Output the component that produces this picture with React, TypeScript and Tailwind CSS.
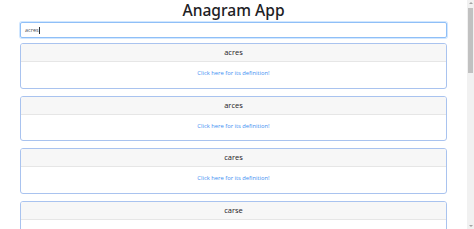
import React from 'react';

const words = ['acres', 'arces', 'cares', 'carse'];

const WordCard = ({ word }: { word: string }) => (
  <div className="flex h-[45.7px] shrink-0 flex-col overflow-hidden rounded-[3px] border border-[#a9c3ef] bg-white">
    <div className="flex h-[18px] shrink-0 items-center justify-center border-b border-[#e6e6e6] bg-[#f7f7f7] text-[7.5px] font-medium text-[#1d2125]">
      {word}
    </div>
    <div className="flex flex-1 justify-center pt-[7px]">
      <a className="h-fit text-[5.8px] leading-[8px] text-[#3d8ef2]">Click here for its definition!</a>
    </div>
  </div>
);

export default function App() {
  return (
    <div
      className="flex h-[229px] w-[474px] overflow-hidden bg-white"
      style={{ fontFamily: '"Open Sans", "Noto Sans", sans-serif' }}
    >
      <div className="flex min-w-0 flex-1 flex-col px-5">
        <h1 className="h-[22px] shrink-0 text-center font-['Noto_Sans',sans-serif] text-[15.6px] font-medium leading-[21px] text-[#1d2125]">
          Anagram App
        </h1>
        <div className="flex h-[16px] shrink-0 items-center rounded-[2px] border border-[#8fbff7] pl-[4px] text-[5.5px] text-[#495057] shadow-[0_0_0_1px_rgba(0,123,255,0.18)]">
          acres<span className="ml-[0.5px] h-[7px] w-[0.6px] bg-[#333]" />
        </div>
        <div className="mt-[5px] flex flex-col gap-[7px]">
          {words.map((w) => (
            <WordCard key={w} word={w} />
          ))}
        </div>
      </div>
      <div className="flex w-[7px] shrink-0 flex-col items-center bg-[#f1f1f1]">
        <div className="mt-[2px] h-0 w-0 border-x-[2px] border-b-[2px] border-x-transparent border-b-[#a3a3a3]" />
        <div className="mt-[4px] h-[65px] w-[5px] bg-[#c1c1c1]" />
        <div className="flex-1" />
        <div className="mb-[2px] h-0 w-0 border-x-[2px] border-t-[2px] border-x-transparent border-t-[#a3a3a3]" />
      </div>
    </div>
  );
}
